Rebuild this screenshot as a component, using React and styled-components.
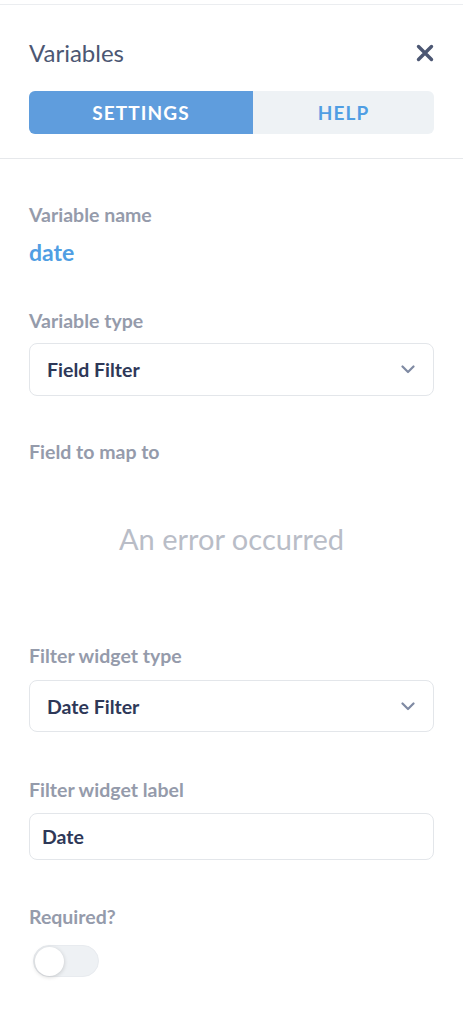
import React from "react";
import styled, { createGlobalStyle } from "styled-components";

const GlobalStyle = createGlobalStyle`
  html, body {
    margin: 0;
    padding: 0;
    background: #ffffff;
    font-family: Lato, "Open Sans", sans-serif;
    -webkit-font-smoothing: antialiased;
  }
`;

const Panel = styled.div`
  margin-top: 4px;
  border-top: 1px solid #ebedf0;
  background: #fff;
  height: 1019px;
  overflow: hidden;
`;

const Header = styled.div`
  padding: 35px 29px 24px 29px;
  border-bottom: 1px solid #e6e8eb;
`;

const TitleRow = styled.div`
  display: flex;
  align-items: center;
  justify-content: space-between;
  height: 26px;
`;

const Title = styled.h2`
  margin: 0;
  font-size: 24px;
  line-height: 26px;
  font-weight: 400;
  color: #4c5773;
`;

const CloseButton = styled.button`
  border: none;
  background: none;
  padding: 0;
  display: flex;
  cursor: pointer;
  color: #4c5773;
`;

const Tabs = styled.div`
  display: flex;
  margin-top: 25px;
  height: 43px;
  border-radius: 6px;
  overflow: hidden;
  background: #eef2f5;
`;

const Tab = styled.div`
  flex: ${(p) => (p.$active ? "0 0 224px" : "1")};
  display: flex;
  align-items: center;
  justify-content: center;
  font-size: 19px;
  font-weight: 700;
  letter-spacing: 1.1px;
  text-transform: uppercase;
  background: ${(p) => (p.$active ? "#5f9ddd" : "transparent")};
  color: ${(p) => (p.$active ? "#ffffff" : "#509ee3")};
`;

const Body = styled.div`
  padding: 45px 29px 0 29px;
  display: flex;
  flex-direction: column;
  gap: 45px;
`;

const Field = styled.div`
  display: flex;
  flex-direction: column;
  margin-top: ${(p) => p.$extra || 0}px;
`;

const Label = styled.div`
  font-size: 19.5px;
  line-height: 22px;
  font-weight: 700;
  color: #959bab;
  margin-bottom: ${(p) => p.$gap ?? 11}px;
`;

const VarName = styled.div`
  font-size: 23px;
  line-height: 26px;
  font-weight: 700;
  color: #509ee3;
`;

const Select = styled.div`
  height: ${(p) => p.$h || 53}px;
  box-sizing: border-box;
  border: 1px solid #e3e6ea;
  border-radius: 8px;
  display: flex;
  align-items: center;
  justify-content: space-between;
  padding: 0 18px 0 17px;
  font-size: 19.5px;
  font-weight: 700;
  color: #2e3858;
`;

const Input = styled.div`
  height: 47px;
  box-sizing: border-box;
  border: 1px solid #e3e6ea;
  border-radius: 8px;
  display: flex;
  align-items: center;
  padding: 0 12px;
  font-size: 19.5px;
  font-weight: 700;
  color: #2e3858;
`;

const ErrorBox = styled.div`
  padding: 60px 0 45px 0;
  text-align: center;
  font-size: 29px;
  line-height: 32px;
  font-weight: 400;
  color: #b9bdc7;
`;

const Toggle = styled.div`
  width: 66px;
  height: 32px;
  margin-left: 4px;
  border-radius: 16px;
  background: #eef1f4;
  border: 1px solid #e8ebef;
  box-sizing: border-box;
  display: flex;
  align-items: center;
  padding-left: 1px;
`;

const Knob = styled.div`
  width: 29px;
  height: 29px;
  border-radius: 50%;
  background: #ffffff;
  box-shadow: 0 1px 4px rgba(0, 0, 0, 0.18);
`;

const Chevron = () => (
  <svg width="14" height="9" viewBox="0 0 14 9" fill="none">
    <path
      d="M1.5 1.5 L7 7 L12.5 1.5"
      stroke="#7f8aa3"
      strokeWidth="2.2"
      strokeLinecap="round"
      strokeLinejoin="round"
    />
  </svg>
);

const CloseIcon = () => (
  <svg width="18" height="18" viewBox="0 0 18 18" fill="none">
    <path
      d="M2.5 2.5 L15.5 15.5 M15.5 2.5 L2.5 15.5"
      stroke="#4c5773"
      strokeWidth="3.4"
      strokeLinecap="round"
    />
  </svg>
);

export default function App() {
  return (
    <>
      <GlobalStyle />
      <Panel>
        <Header>
          <TitleRow>
            <Title>Variables</Title>
            <CloseButton>
              <CloseIcon />
            </CloseButton>
          </TitleRow>
          <Tabs>
            <Tab $active>Settings</Tab>
            <Tab>Help</Tab>
          </Tabs>
        </Header>
        <Body>
          <Field>
            <Label $gap={13}>Variable name</Label>
            <VarName>date</VarName>
          </Field>
          <Field>
            <Label>Variable type</Label>
            <Select>
              Field Filter
              <Chevron />
            </Select>
          </Field>
          <Field>
            <Label $gap={0}>Field to map to</Label>
            <ErrorBox>An error occurred</ErrorBox>
          </Field>
          <Field>
            <Label $gap={13}>Filter widget type</Label>
            <Select $h={52}>
              Date Filter
              <Chevron />
            </Select>
          </Field>
          <Field $extra={2}>
            <Label $gap={12}>Filter widget label</Label>
            <Input>Date</Input>
          </Field>
          <Field $extra={1}>
            <Label $gap={17}>Required?</Label>
            <Toggle>
              <Knob />
            </Toggle>
          </Field>
        </Body>
      </Panel>
    </>
  );
}
